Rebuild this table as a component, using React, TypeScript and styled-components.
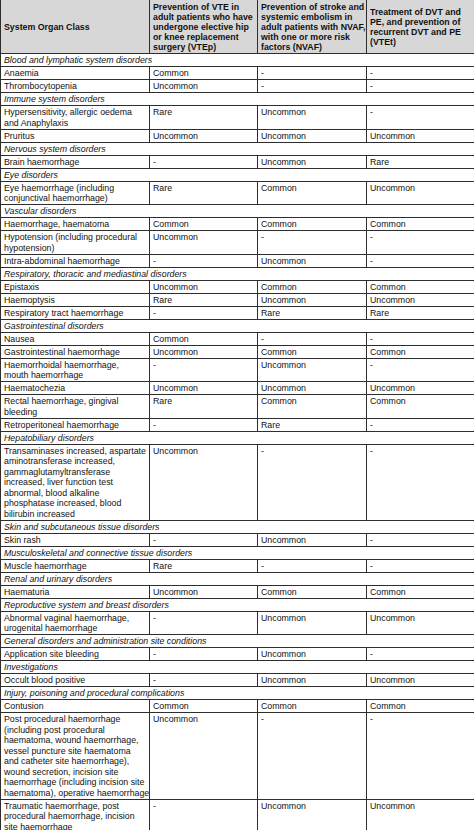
import React from 'react';
import styled, { createGlobalStyle } from 'styled-components';

const GlobalStyle = createGlobalStyle`
  html, body { margin: 0; padding: 0; background: #ffffff; }
  body { font-family: "Liberation Sans", Arial, Helvetica, sans-serif; }
`;

const Table = styled.table`
  width: 474px;
  border-collapse: collapse;
  table-layout: fixed;
  font-family: "Liberation Sans", Arial, Helvetica, sans-serif;
  font-size: 8.8px;
  color: #111111;
`;

const HeadCell = styled.th`
  background: #d7d7d7;
  font-weight: bold;
  text-align: left;
  vertical-align: middle;
  line-height: 10px;
  padding: 2px 3px 1px 3px;
  border: 1px solid #2e2e2e;
  border-top: none;
`;

const Cell = styled.td`
  text-align: left;
  vertical-align: top;
  line-height: 10.5px;
  padding: 1px 3px 0.5px 3px;
  border: 1px solid #2e2e2e;
`;

const CategoryCell = styled(Cell)`
  font-style: italic;
`;

const Line = styled.span`
  display: block;
  white-space: nowrap;
`;

type DataRow = { lines: string[]; vtep: string; nvaf: string; vtet: string };
type Row = { cat: string } | DataRow;

const rows: Row[] = [
  { cat: 'Blood and lymphatic system disorders' },
  { lines: ['Anaemia'], vtep: 'Common', nvaf: '-', vtet: '-' },
  { lines: ['Thrombocytopenia'], vtep: 'Uncommon', nvaf: '-', vtet: '-' },
  { cat: 'Immune system disorders' },
  { lines: ['Hypersensitivity, allergic oedema', 'and Anaphylaxis'], vtep: 'Rare', nvaf: 'Uncommon', vtet: '-' },
  { lines: ['Pruritus'], vtep: 'Uncommon', nvaf: 'Uncommon', vtet: 'Uncommon' },
  { cat: 'Nervous system disorders' },
  { lines: ['Brain haemorrhage'], vtep: '-', nvaf: 'Uncommon', vtet: 'Rare' },
  { cat: 'Eye disorders' },
  { lines: ['Eye haemorrhage (including', 'conjunctival haemorrhage)'], vtep: 'Rare', nvaf: 'Common', vtet: 'Uncommon' },
  { cat: 'Vascular disorders' },
  { lines: ['Haemorrhage, haematoma'], vtep: 'Common', nvaf: 'Common', vtet: 'Common' },
  { lines: ['Hypotension (including procedural', 'hypotension)'], vtep: 'Uncommon', nvaf: '-', vtet: '-' },
  { lines: ['Intra-abdominal haemorrhage'], vtep: '-', nvaf: 'Uncommon', vtet: '-' },
  { cat: 'Respiratory, thoracic and mediastinal disorders' },
  { lines: ['Epistaxis'], vtep: 'Uncommon', nvaf: 'Common', vtet: 'Common' },
  { lines: ['Haemoptysis'], vtep: 'Rare', nvaf: 'Uncommon', vtet: 'Uncommon' },
  { lines: ['Respiratory tract haemorrhage'], vtep: '-', nvaf: 'Rare', vtet: 'Rare' },
  { cat: 'Gastrointestinal disorders' },
  { lines: ['Nausea'], vtep: 'Common', nvaf: '-', vtet: '-' },
  { lines: ['Gastrointestinal haemorrhage'], vtep: 'Uncommon', nvaf: 'Common', vtet: 'Common' },
  { lines: ['Haemorrhoidal haemorrhage,', 'mouth haemorrhage'], vtep: '-', nvaf: 'Uncommon', vtet: '-' },
  { lines: ['Haematochezia'], vtep: 'Uncommon', nvaf: 'Uncommon', vtet: 'Uncommon' },
  { lines: ['Rectal haemorrhage, gingival', 'bleeding'], vtep: 'Rare', nvaf: 'Common', vtet: 'Common' },
  { lines: ['Retroperitoneal haemorrhage'], vtep: '-', nvaf: 'Rare', vtet: '-' },
  { cat: 'Hepatobiliary disorders' },
  {
    lines: [
      'Transaminases increased, aspartate',
      'aminotransferase increased,',
      'gammaglutamyltransferase',
      'increased, liver function test',
      'abnormal, blood alkaline',
      'phosphatase increased, blood',
      'bilirubin increased',
    ],
    vtep: 'Uncommon',
    nvaf: '-',
    vtet: '-',
  },
  { cat: 'Skin and subcutaneous tissue disorders' },
  { lines: ['Skin rash'], vtep: '-', nvaf: 'Uncommon', vtet: '-' },
  { cat: 'Musculoskeletal and connective tissue disorders' },
  { lines: ['Muscle haemorrhage'], vtep: 'Rare', nvaf: '-', vtet: '-' },
  { cat: 'Renal and urinary disorders' },
  { lines: ['Haematuria'], vtep: 'Uncommon', nvaf: 'Common', vtet: 'Common' },
  { cat: 'Reproductive system and breast disorders' },
  { lines: ['Abnormal vaginal haemorrhage,', 'urogenital haemorrhage'], vtep: '-', nvaf: 'Uncommon', vtet: 'Uncommon' },
  { cat: 'General disorders and administration site conditions' },
  { lines: ['Application site bleeding'], vtep: '-', nvaf: 'Uncommon', vtet: '-' },
  { cat: 'Investigations' },
  { lines: ['Occult blood positive'], vtep: '-', nvaf: 'Uncommon', vtet: 'Uncommon' },
  { cat: 'Injury, poisoning and procedural complications' },
  { lines: ['Contusion'], vtep: 'Common', nvaf: 'Common', vtet: 'Common' },
  {
    lines: [
      'Post procedural haemorrhage',
      '(including post procedural',
      'haematoma, wound haemorrhage,',
      'vessel puncture site haematoma',
      'and catheter site haemorrhage),',
      'wound secretion, incision site',
      'haemorrhage (including incision site',
      'haematoma), operative haemorrhage',
    ],
    vtep: 'Uncommon',
    nvaf: '-',
    vtet: '-',
  },
  {
    lines: ['Traumatic haemorrhage, post', 'procedural haemorrhage, incision', 'site haemorrhage'],
    vtep: '-',
    nvaf: 'Uncommon',
    vtet: 'Uncommon',
  },
];

const headers: string[][] = [
  ['System Organ Class'],
  ['Prevention of VTE in', 'adult patients who have', 'undergone elective hip', 'or knee replacement', 'surgery (VTEp)'],
  ['Prevention of stroke and', 'systemic embolism in', 'adult patients with NVAF,', 'with one or more risk', 'factors (NVAF)'],
  ['Treatment of DVT and', 'PE, and prevention of', 'recurrent DVT and PE', '(VTEt)'],
];

const Lines = ({ items }: { items: string[] }) => (
  <>
    {items.map((t, i) => (
      <Line key={i}>{t}</Line>
    ))}
  </>
);

export default function App() {
  return (
    <>
      <GlobalStyle />
      <Table>
        <colgroup>
          <col style={{ width: 149 }} />
          <col style={{ width: 108 }} />
          <col style={{ width: 109 }} />
          <col style={{ width: 108 }} />
        </colgroup>
        <thead>
          <tr>
            {headers.map((h, i) => (
              <HeadCell key={i}>
                <Lines items={h} />
              </HeadCell>
            ))}
          </tr>
        </thead>
        <tbody>
          {rows.map((r, i) =>
            'cat' in r ? (
              <tr key={i}>
                <CategoryCell colSpan={4}>
                  <Line>{r.cat}</Line>
                </CategoryCell>
              </tr>
            ) : (
              <tr key={i}>
                <Cell>
                  <Lines items={r.lines} />
                </Cell>
                <Cell>
                  <Line>{r.vtep}</Line>
                </Cell>
                <Cell>
                  <Line>{r.nvaf}</Line>
                </Cell>
                <Cell>
                  <Line>{r.vtet}</Line>
                </Cell>
              </tr>
            )
          )}
        </tbody>
      </Table>
    </>
  );
}
